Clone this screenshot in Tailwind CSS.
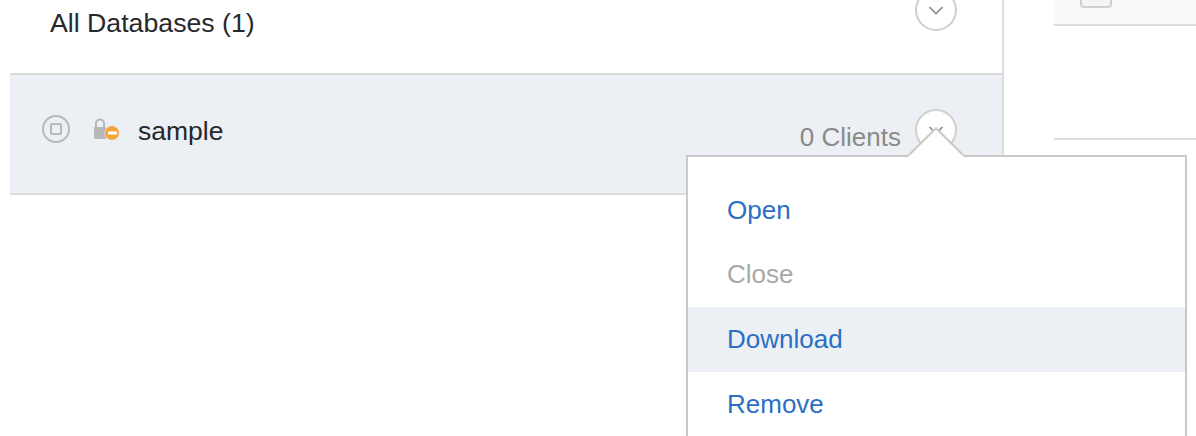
<!DOCTYPE html>
<html lang="en">
<head>
    <meta charset="UTF-8">
    <title>Databases</title>
    <script src="https://cdn.jsdelivr.net/npm/@tailwindcss/browser@4"></script>
</head>
<body class="bg-white">
    <div class="relative w-[1196px] h-[436px] overflow-hidden flex font-['Liberation_Sans',sans-serif]">
        <!-- database list -->
        <div class="ml-[10px] w-[994px] h-full border-r-2 border-[#dcdcdc] shrink-0">
            <div class="h-[75px] border-b-2 border-[#d9d9d9] flex pl-[40px] pr-[45px] justify-between">
                <h2 class="text-[26.7px] leading-[46px] text-[#26282b]">All Databases (1)</h2>
                <button class="w-[42px] h-[42px] -mt-[11px] rounded-full border-2 border-[#cfcfcf] bg-white flex items-center justify-center">
                    <svg width="16" height="9" viewBox="0 0 16 9" fill="none" stroke="#8a8a8a" stroke-width="1.6"><path d="M1.5 1l6.5 6.5L14.5 1"/></svg>
                </button>
            </div>
            <div class="h-[120px] bg-[#eceff4] border-b-2 border-[#dcdcdc] flex pl-[32px] pr-[45px]">
                <div class="w-[28px] h-[28px] mt-[40px] rounded-full border-2 border-[#b9b9b9] flex items-center justify-center">
                    <div class="w-[12px] h-[12px] border-2 border-[#b9b9b9] rounded-[2px]"></div>
                </div>
                <svg class="ml-[23px] mt-[42px] shrink-0" width="28" height="26" viewBox="0 0 28 26">
                    <path d="M3 11V6.5a4 4 0 0 1 8 0V11" fill="none" stroke="#b8b8b8" stroke-width="2"/>
                    <rect x="1" y="10" width="12" height="12" rx="1" fill="#b8b8b8"/>
                    <circle cx="19" cy="16" r="7.5" fill="#eceff4"/>
                    <circle cx="19" cy="16" r="7" fill="#f2a738"/>
                    <rect x="15" y="14.5" width="9" height="3" fill="#ffffff"/>
                </svg>
                <span class="ml-[17px] mt-[40px] text-[26.5px] leading-[32px] text-[#26282b]">sample</span>
                <span class="ml-auto mt-[46px] text-[26px] leading-[32px] text-[#8a8a8a]">0 Clients</span>
                <button class="ml-[14px] mt-[34px] w-[42px] h-[42px] rounded-full border-2 border-[#cfcfcf] bg-white flex items-center justify-center">
                    <svg width="16" height="9" viewBox="0 0 16 9" fill="none" stroke="#8a8a8a" stroke-width="1.6"><path d="M1.5 1l6.5 6.5L14.5 1"/></svg>
                </button>
            </div>
        </div>

        <!-- right panel -->
        <div class="ml-[50px] flex-1">
            <div class="h-[26px] bg-[#f9f9f9] border-b-2 border-[#dcdcdc] pl-[26px]">
                <div class="w-[32px] h-[8px] bg-[#f4f4f4] border-2 border-t-0 border-[#cfcfcf] rounded-b-[4px]"></div>
            </div>
            <div class="h-[114px] border-b-2 border-[#dcdcdc]"></div>
        </div>

        <!-- action menu -->
        <div class="absolute left-[686px] top-[155px] w-[501px] h-[300px] bg-white border-2 border-[#c9c9c9] pt-[22px]">
            <svg class="absolute left-[219px] -top-[30px]" width="58" height="30" viewBox="0 0 58 30">
                <path d="M1 29L29 1l28 28" fill="#ffffff" stroke="#c9c9c9" stroke-width="2"/>
                <rect x="2" y="28" width="54" height="2" fill="#ffffff"/>
            </svg>
            <a class="block h-[64px] pl-[39px] text-[26px] leading-[62px] text-[#2a6fc4]">Open</a>
            <a class="block h-[64px] pl-[39px] text-[26px] leading-[62px] text-[#a8a8a8]">Close</a>
            <a class="block h-[65px] pl-[39px] text-[26px] leading-[64px] text-[#2a6fc4] bg-[#eceff4]">Download</a>
            <a class="block h-[65px] pl-[39px] text-[26px] leading-[64px] text-[#2a6fc4]">Remove</a>
        </div>
    </div>
</body>
</html>
